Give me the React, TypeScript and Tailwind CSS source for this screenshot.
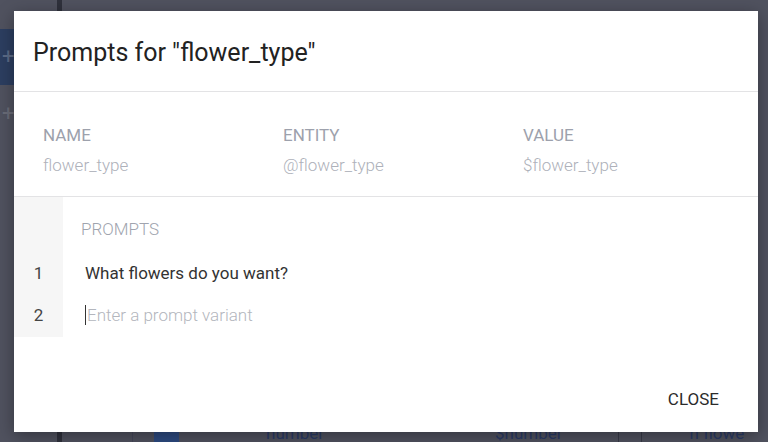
import React from 'react';

const fields = [
  { label: 'NAME', value: 'flower_type' },
  { label: 'ENTITY', value: '@flower_type' },
  { label: 'VALUE', value: '$flower_type' },
];

function Backdrop() {
  return (
    <div className="flex h-full w-full bg-[#50525f]">
      {/* sidebar under the dialog */}
      <div className="flex w-[57px] flex-col">
        <div className="mt-[29px] flex h-[56px] items-center bg-[#2c3e60] pl-[2px] text-[22px] leading-none text-[#5c6b87]">+</div>
        <div className="mt-[18px] pl-[2px] text-[22px] leading-none text-[#6a6c78]">+</div>
      </div>
      <div className="w-[5px] bg-[#2f313c]" />
      {/* main area under the dialog */}
      <div className="flex flex-1 flex-col">
        <div className="flex-1" />
        <div className="flex h-[12px] items-end text-[17px] leading-none text-[#2a3a66]">
          <div className="h-full w-[71px] border-r border-[#45475a]" />
          <div className="ml-[21px] h-full w-[25px] bg-[#2d4a80]" />
          <div className="ml-[87px]">number</div>
          <div className="ml-[171px]">$number</div>
          <div className="ml-[55px] h-full w-[24px] border-x border-[#383a48]" />
          <div className="ml-[48px]">h flowe</div>
        </div>
      </div>
    </div>
  );
}

export default function App() {
  return (
    <div className="relative h-[442px] w-[768px] overflow-hidden" style={{ fontFamily: 'Roboto, "Liberation Sans", sans-serif' }}>
      <Backdrop />

      {/* Dialog */}
      <div className="absolute left-[14px] top-[11px] flex h-[421px] w-[744px] flex-col bg-white shadow-[0_4px_16px_rgba(0,0,0,0.35)]">
        {/* Header */}
        <div className="flex h-[81px] shrink-0 items-center border-b border-[#e3e3e5] pl-[19px] pt-[3px]">
          <h2 className="text-[25px] font-normal text-[#222]">Prompts for "flower_type"</h2>
        </div>

        {/* Info */}
        <div className="flex h-[105px] shrink-0 border-b border-[#e3e3e5] pl-[29px] pt-[31px]">
          {fields.map((f) => (
            <div key={f.label} className="w-[240px] shrink-0">
              <div className="text-[17px] leading-6 text-[#9da1ac]">{f.label}</div>
              <div className="mt-[6px] text-[17px] font-light leading-6 text-[#aeb1ba]">{f.value}</div>
            </div>
          ))}
        </div>

        {/* Prompts */}
        <div className="flex flex-col">
          <div className="flex">
            <div className="w-[49px] bg-[#f6f6f6]" />
            <div className="pb-[14px] pl-[18px] pt-[22px] text-[17px] font-light leading-5 text-[#a0a4ae]">PROMPTS</div>
          </div>
          <div className="flex h-[41px] items-center">
            <div className="flex h-full w-[49px] items-center justify-center bg-[#f6f6f6] text-[17px] text-[#444]">1</div>
            <div className="pl-[22px] text-[17px] text-[#333]">What flowers do you want?</div>
          </div>
          <div className="flex h-[43px] items-start">
            <div className="flex h-full w-[49px] items-start justify-center bg-[#f6f6f6] pt-[11px] text-[17px] leading-[20px] text-[#444]">2</div>
            <div className="flex items-center pl-[22px] pt-[11px] text-[17px] font-light leading-[20px] text-[#b3b6bd]">
              <span className="mr-px inline-block h-[20px] w-px bg-[#333]" />
              Enter a prompt variant
            </div>
          </div>
        </div>

        <div className="flex-1" />

        {/* Footer */}
        <div className="flex justify-end pb-[20px] pr-[39px]">
          <button className="text-[17px] text-[#2b2b2b]">CLOSE</button>
        </div>
      </div>
    </div>
  );
}
